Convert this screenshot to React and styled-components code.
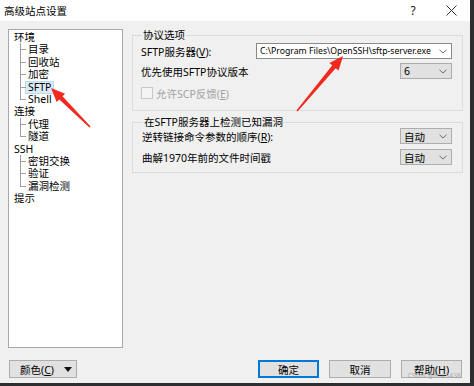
import React from 'react'
import styled, { createGlobalStyle } from 'styled-components'

const GlobalStyle = createGlobalStyle`
  html, body {
    margin: 0;
    padding: 0;
    background: #2e2e30;
  }
  body {
    width: 474px;
    height: 386px;
    overflow: hidden;
    font-family: "Noto Sans", "Noto Sans CJK SC", sans-serif;
  }
`

const Dialog = styled.div`
  position: relative;
  width: 470px;
  height: 383px;
  background: #f0f0f0;
  display: flex;
  flex-direction: column;
  font-size: 10.5px;
  color: #000;
`

const TitleBar = styled.div`
  height: 21px;
  background: #fff;
  display: flex;
  align-items: center;
  padding-left: 4px;
  font-size: 10.5px;
`

const TitleText = styled.div`
  flex: 1;
`

const TitleButton = styled.div`
  width: 38px;
  height: 21px;
  display: flex;
  align-items: center;
  justify-content: center;
  font-size: 12px;
  color: #222;
`

const Body = styled.div`
  display: flex;
  padding: 8px 7px 0 8px;
  gap: 9px;
`

const Tree = styled.div`
  width: 108px;
  height: 316px;
  background: #fff;
  border: 1px solid #a8a8a8;
  padding: 1px 0 0 5px;
`

const TreeRow = styled.div`
  height: 12.4px;
  line-height: 12.4px;
  white-space: nowrap;
`

const Children = styled.div``

const Child = styled.div`
  position: relative;
  height: 12.4px;
  line-height: 12.4px;
  padding-left: 13px;
  white-space: nowrap;

  &::before {
    content: '';
    position: absolute;
    left: 6px;
    top: 0;
    width: 5px;
    height: 6px;
    border-left: 1px solid #a0a0a0;
    border-bottom: 1px solid #a0a0a0;
  }

  &:not(:last-child)::after {
    content: '';
    position: absolute;
    left: 6px;
    top: 6px;
    bottom: 0;
    border-left: 1px solid #a0a0a0;
  }
`

const Label = styled.span`
  display: inline-block;
  padding: 0 2px;
  margin-left: -2px;
  line-height: 11px;
  background: ${(p) => (p.selected ? '#d9ebf9' : 'transparent')};
  border: 1px solid ${(p) => (p.selected ? '#bcdcf4' : 'transparent')};
`

const RightColumn = styled.div`
  flex: 1;
  display: flex;
  flex-direction: column;
`

const Group = styled.fieldset`
  margin: 0 0 ${(p) => p.gap || 0}px 0;
  padding: ${(p) => p.pad || '0 10px 8px 9px'};
  border: 1px solid #dcdcdc;
  display: flex;
  flex-direction: column;
  gap: ${(p) => p.rowGap || 4}px;
  min-width: 0;
`

const Legend = styled.legend`
  padding: 0 1px;
  margin-left: 1px;
  line-height: 13px;
  font-size: 10.5px;
`

const Row = styled.div`
  display: flex;
  align-items: center;
  justify-content: space-between;
  height: 16px;
  margin-top: ${(p) => p.top || 0}px;
`

const Field = styled.div`
  white-space: nowrap;
  color: ${(p) => (p.disabled ? '#a0a0a0' : '#000')};
`

const CheckField = styled.div`
  display: flex;
  align-items: center;
  gap: 3px;
`

const Combo = styled.div`
  width: ${(p) => p.w}px;
  height: 16px;
  box-sizing: border-box;
  display: flex;
  align-items: center;
  padding: 0 0 0 3px;
  background: ${(p) => (p.editable ? '#fff' : '#e1e1e1')};
  border: 1px solid ${(p) => (p.editable ? '#8a8a8a' : '#adadad')};
  font-size: ${(p) => (p.editable ? '8.7px' : '10.5px')};
  white-space: nowrap;
`

const ComboText = styled.div`
  flex: 1;
  overflow: hidden;
`

const Chevron = styled.div`
  width: 16px;
  display: flex;
  align-items: center;
  justify-content: center;
`

const CheckBox = styled.div`
  width: 10px;
  height: 10px;
  border: 1px solid #c8c8c8;
  background: #f4f4f4;
`

const Footer = styled.div`
  display: flex;
  align-items: center;
  padding: 12px 8px 0 9px;
  gap: 10px;
`

const Button = styled.div`
  width: ${(p) => p.w}px;
  height: 18px;
  box-sizing: border-box;
  display: flex;
  align-items: center;
  justify-content: center;
  background: #e1e1e1;
  border: ${(p) => (p.primary ? '2px solid #0078d7' : '1px solid #adadad')};
  font-size: 10.5px;
  white-space: nowrap;
`

const SplitButton = styled(Button)`
  justify-content: space-between;
  padding: 0 4px 0 10px;
`

const Spacer = styled.div`
  flex: 1;
`

const Watermark = styled.div`
  position: absolute;
  right: 9px;
  bottom: 4px;
  font-size: 6.5px;
  line-height: 7px;
  color: rgba(150, 150, 150, 0.75);
  letter-spacing: 0.2px;
`

const Overlay = styled.svg`
  position: absolute;
  left: 0;
  top: 0;
  pointer-events: none;
`

const arrowPoints = (tx, ty, px, py) => {
  const dx = px - tx
  const dy = py - ty
  const len = Math.hypot(dx, dy)
  const ux = dx / len
  const uy = dy / len
  const nx = -uy
  const ny = ux
  const head = 14
  const hw = 6
  const sw = 2.2
  const bx = px - ux * head
  const by = py - uy * head
  const pts = [
    [tx + nx * 0.8, ty + ny * 0.8],
    [bx + nx * sw, by + ny * sw],
    [bx + nx * hw, by + ny * hw],
    [px, py],
    [bx - nx * hw, by - ny * hw],
    [bx - nx * sw, by - ny * sw],
    [tx - nx * 0.8, ty - ny * 0.8],
  ]
  return pts.map((p) => p.map((v) => v.toFixed(1)).join(',')).join(' ')
}

const ChevronIcon = () => (
  <svg width="8" height="5" viewBox="0 0 8 5">
    <path d="M0.5 0.8 L4 4 L7.5 0.8" fill="none" stroke="#606060" strokeWidth="0.9" />
  </svg>
)

const tree = [
  { label: '环境', children: ['目录', '回收站', '加密', 'SFTP', 'Shell'] },
  { label: '连接', children: ['代理', '隧道'] },
  { label: 'SSH', children: ['密钥交换', '验证', '漏洞检测'] },
  { label: '提示', children: [] },
]

export default function App() {
  return (
    <>
      <GlobalStyle />
      <Dialog>
        <TitleBar>
          <TitleText>高级站点设置</TitleText>
          <TitleButton>?</TitleButton>
          <TitleButton>
            <svg width="11" height="11" viewBox="0 0 11 11">
              <path d="M0.5 0.5 L10.5 10.5 M10.5 0.5 L0.5 10.5" stroke="#333" strokeWidth="1" />
            </svg>
          </TitleButton>
        </TitleBar>

        <Body>
          <Tree>
            {tree.map((node) => (
              <div key={node.label}>
                <TreeRow>{node.label}</TreeRow>
                {node.children.length > 0 && (
                  <Children>
                    {node.children.map((c) => (
                      <Child key={c}>
                        <Label selected={c === 'SFTP'}>{c}</Label>
                      </Child>
                    ))}
                  </Children>
                )}
              </div>
            ))}
          </Tree>

          <RightColumn>
            <Group gap={5} pad="0 10px 9px 8px">
              <Legend>协议选项</Legend>
              <Row top={1}>
                <Field>SFTP服务器(<u>V</u>):</Field>
                <Combo editable w={196}>
                  <ComboText>C:\Program Files\OpenSSH\sftp-server.exe</ComboText>
                  <Chevron><ChevronIcon /></Chevron>
                </Combo>
              </Row>
              <Row>
                <Field>优先使用SFTP协议版本</Field>
                <Combo w={52}>
                  <ComboText>6</ComboText>
                  <Chevron><ChevronIcon /></Chevron>
                </Combo>
              </Row>
              <Row top={2}>
                <CheckField>
                  <CheckBox />
                  <Field disabled>允许SCP反馈(<u>E</u>)</Field>
                </CheckField>
              </Row>
            </Group>

            <Group rowGap={5} pad="0 10px 7px 9px">
              <Legend>在SFTP服务器上检测已知漏洞</Legend>
              <Row top={-1}>
                <Field>逆转链接命令参数的顺序(<u>R</u>):</Field>
                <Combo w={52}>
                  <ComboText>自动</ComboText>
                  <Chevron><ChevronIcon /></Chevron>
                </Combo>
              </Row>
              <Row>
                <Field>曲解1970年前的文件时间戳</Field>
                <Combo w={52}>
                  <ComboText>自动</ComboText>
                  <Chevron><ChevronIcon /></Chevron>
                </Combo>
              </Row>
            </Group>
          </RightColumn>
        </Body>

        <Footer>
          <SplitButton w={68}>
            <span>颜色(<u>C</u>)</span>
            <svg width="8" height="5" viewBox="0 0 8 5">
              <path d="M0 0 L8 0 L4 5 Z" fill="#111" />
            </svg>
          </SplitButton>
          <Spacer />
          <Button primary w={61}>确定</Button>
          <Button w={62}>取消</Button>
          <Button w={61}><span>帮助(<u>H</u>)</span></Button>
        </Footer>

        <Watermark>CSDN @mw3438</Watermark>
      </Dialog>

      <Overlay width="474" height="386">
        <polygon points={arrowPoints(90, 127, 51, 88)} fill="#f02a1e" />
        <polygon points={arrowPoints(297, 111, 343, 56)} fill="#f02a1e" />
      </Overlay>
    </>
  )
}
